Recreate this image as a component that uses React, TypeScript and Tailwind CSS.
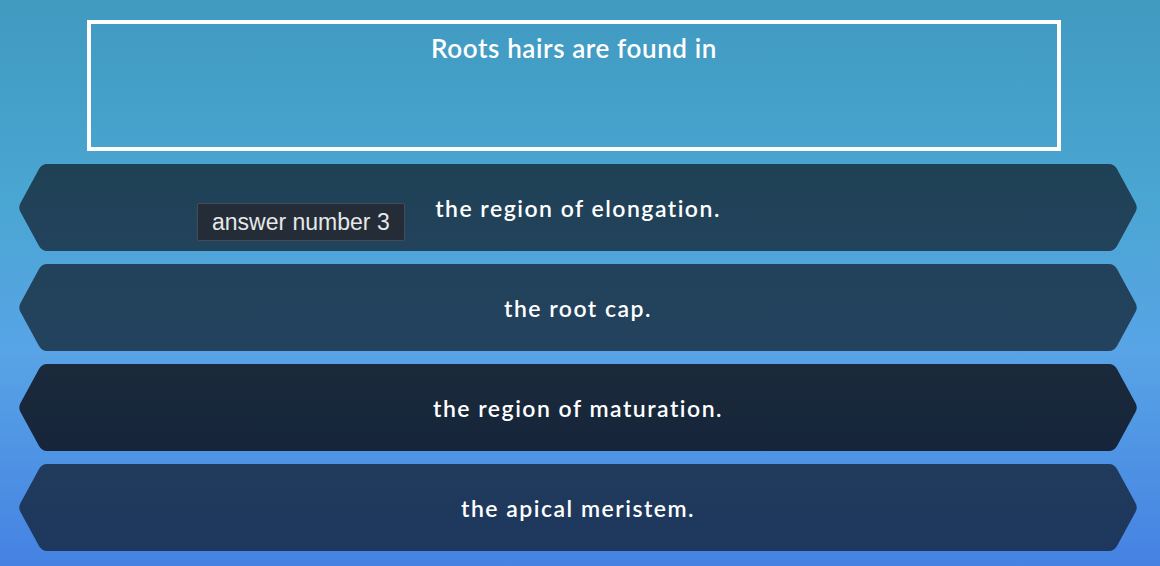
import React from 'react';

const answers = [
  { text: 'the region of elongation.', from: '#1f4155', to: '#22435c' },
  { text: 'the root cap.', from: '#22425b', to: '#23425e' },
  { text: 'the region of maturation.', from: '#1a2a3b', to: '#16253a' },
  { text: 'the apical meristem.', from: '#213b5c', to: '#1d375e' },
];

const HexShape: React.FC<{ from: string; to: string; id: string }> = ({ from, to, id }) => (
  <svg className="absolute inset-0" width="1118" height="87" viewBox="0 0 1118 87">
    <defs>
      <linearGradient id={id} x1="0" y1="0" x2="0" y2="1">
        <stop offset="0" stopColor={from} />
        <stop offset="1" stopColor={to} />
      </linearGradient>
    </defs>
    <path
      d="M28 0 H1090 Q1095 0 1098 5 L1116.5 39 Q1119 43.5 1116.5 48 L1098 82 Q1095 87 1090 87 H28 Q23 87 20 82 L1.5 48 Q-1 43.5 1.5 39 L20 5 Q23 0 28 0 Z"
      fill={`url(#${id})`}
    />
  </svg>
);

export default function App() {
  return (
    <div
      className="w-[1160px] h-[566px] overflow-hidden flex flex-col pt-[20px] bg-[linear-gradient(180deg,#409ac0_0%,#4aa6d2_35%,#58a4e6_62%,#4582e2_100%)]"
      style={{ fontFamily: 'Lato, "Noto Sans", sans-serif' }}
    >
      <div className="ml-[87px] w-[974px] h-[131px] border-4 border-white pt-[9px] text-center text-white text-[26px] font-semibold tracking-[0.6px] leading-[30px]">
        Roots hairs are found in
      </div>

      <div className="mt-[13px] ml-[19px] w-[1118px] flex flex-col gap-[13px]">
        {answers.map((a, i) => (
          <div key={i} className="relative h-[87px] flex items-center justify-center">
            <HexShape from={a.from} to={a.to} id={`ans-${i}`} />
            <span className="relative mt-[2px] text-white text-[23px] font-semibold tracking-[1.5px]">{a.text}</span>
            {i === 0 && (
              <div
                className="absolute left-[178px] top-[39px] h-[38px] px-[14px] flex items-center bg-[#232c37] border border-[#444c56] rounded-[2px] text-[#e6e8ea] text-[23px]"
                style={{ fontFamily: '"Liberation Sans", Arial, sans-serif' }}
              >
                answer number 3
              </div>
            )}
          </div>
        ))}
      </div>
    </div>
  );
}
